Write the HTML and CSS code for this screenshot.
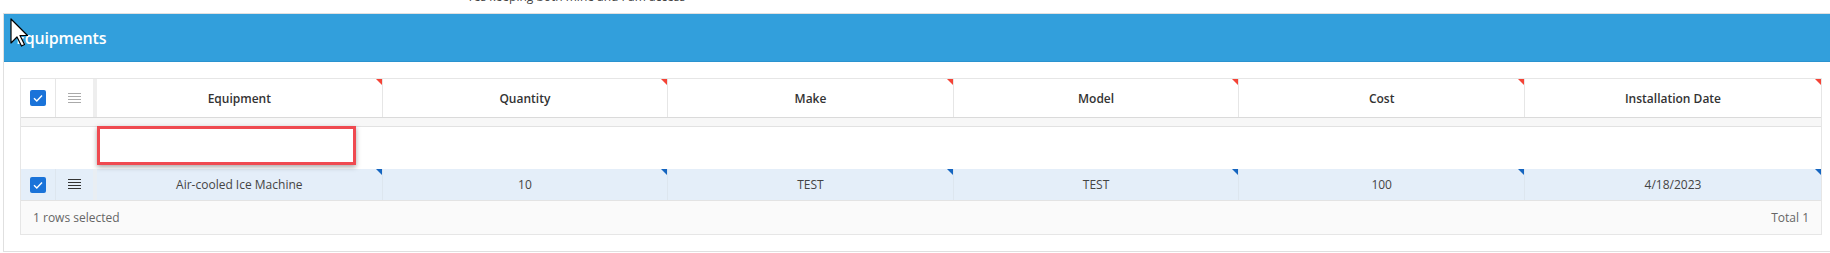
FILE: index.html
```html
<!DOCTYPE html>
<html>
<head>
<meta charset="utf-8">
<link rel="stylesheet" href="styles.css">
</head>
<body>
<div class="page">
  <div class="topnote"><span>Yes keeping both mine and I am access</span></div>
  <section class="panel">
    <header class="panel-head"><h2>Equipments</h2></header>
    <div class="panel-body">
      <div class="grid">
        <div class="row head">
          <div class="cell sel"><span class="cb"><svg viewBox="0 0 16 16" width="16" height="16"><path d="M4 8.2 L6.8 11 L12 5.4" fill="none" stroke="#fff" stroke-width="1.4"/></svg></span></div>
          <div class="cell drag"><svg class="ham light" viewBox="0 0 13 11" width="13" height="11"><path d="M0 0.5H13M0 3.5H13M0 6.5H13M0 9.5H13" stroke="currentColor" stroke-width="1"/></svg></div>
          <div class="cell col">Equipment<i class="flag red"></i></div>
          <div class="cell col">Quantity<i class="flag red"></i></div>
          <div class="cell col">Make<i class="flag red"></i></div>
          <div class="cell col">Model<i class="flag red"></i></div>
          <div class="cell col">Cost<i class="flag red"></i></div>
          <div class="cell col last">Installation Date<i class="flag red"></i></div>
        </div>
        <div class="band"></div>
        <div class="row empty"><div class="annot"></div></div>
        <div class="row data">
          <div class="cell sel"><span class="cb"><svg viewBox="0 0 16 16" width="16" height="16"><path d="M4 8.2 L6.8 11 L12 5.4" fill="none" stroke="#fff" stroke-width="1.4"/></svg></span></div>
          <div class="cell drag"><svg class="ham dark" viewBox="0 0 13 11" width="13" height="11"><path d="M0 0.5H13M0 3.5H13M0 6.5H13M0 9.5H13" stroke="currentColor" stroke-width="1"/></svg></div>
          <div class="cell col">Air-cooled Ice Machine<i class="flag blue"></i></div>
          <div class="cell col">10<i class="flag blue"></i></div>
          <div class="cell col">TEST<i class="flag blue"></i></div>
          <div class="cell col">TEST<i class="flag blue"></i></div>
          <div class="cell col">100<i class="flag blue"></i></div>
          <div class="cell col last">4/18/2023<i class="flag blue"></i></div>
        </div>
        <div class="foot"><span>1 rows selected</span><span>Total 1</span></div>
      </div>
    </div>
  </section>
  <svg class="cursor" viewBox="0 0 19 30" width="19" height="30"><path d="M1 1 L1 25 L7 19 L11.5 28 L14.5 26.5 L10 17.5 L17.5 17.5 Z" fill="#fff" stroke="#000" stroke-width="1.2" stroke-linejoin="round"/></svg>
</div>
</body>
</html>
```

FILE: styles.css
```css
html, body {
  margin: 0;
  padding: 0;
  background: #fff;
  overflow: hidden;
}
.page {
  position: relative;
  width: 1830px;
  height: 253px;
  overflow: hidden;
  font-family: "Open Sans", "Noto Sans", sans-serif;
  color: #333;
}
.topnote {
  height: 13px;
  overflow: hidden;
  padding-left: 467px;
  font-size: 12px;
  color: #444;
}
.topnote span {
  display: block;
  margin-top: -10px;
  line-height: 14px;
  white-space: nowrap;
}
.panel {
  margin-left: 3px;
  width: 1834px;
  border: 1px solid #e0e0e0;
  background: #fff;
}
.panel-head {
  height: 47px;
  background: #329fdc;
  border-bottom: 1px solid #2b93cf;
  display: flex;
  align-items: center;
  padding-left: 12px;
}
.panel-head h2 {
  margin: 0;
  font-size: 16px;
  font-weight: 600;
  color: #fff;
  letter-spacing: -0.2px;
}
.panel-body {
  padding: 16px;
}
.grid {
  width: 1800px;
  border: 1px solid #e6e6e6;
}
.row {
  display: flex;
}
.cell {
  display: flex;
  align-items: center;
  justify-content: center;
  position: relative;
  box-sizing: border-box;
}
.sel {
  flex: 0 0 35px;
  border-right: 1px solid #e6e6e6;
}
.drag {
  flex: 0 0 41px;
  border-right: 4px solid #eeeeee;
}
.col {
  flex: 0 0 285.6px;
  border-right: 1px solid #e6e6e6;
  font-size: 12px;
}
.col.last {
  flex: 1 1 auto;
  border-right: none;
}
.head {
  height: 38px;
}
.head .col {
  font-weight: 600;
  color: #333;
}
.band {
  height: 8px;
  background: #f7f7f7;
  border-top: 1px solid #dadada;
  border-bottom: 1px solid #e2e2e2;
}
.empty {
  height: 42px;
  position: relative;
}
.annot {
  position: absolute;
  left: 76px;
  top: -1px;
  width: 259px;
  height: 39px;
  box-sizing: border-box;
  border: 3px solid #ef4a50;
  box-shadow: 0 2px 5px rgba(0, 0, 0, 0.35);
}
.data {
  height: 32px;
  background: #e4eef9;
  border-bottom: 1px solid #e3e3e3;
  box-sizing: border-box;
}
.data .sel, .data .col {
  border-right-color: #dde6ef;
}
.data .drag {
  border-right-color: #e9eef3;
}
.data .col {
  color: #444;
}
.cb {
  width: 16px;
  height: 16px;
  border-radius: 2px;
  background: #1a73d9;
  display: block;
}
.cb svg {
  display: block;
}
.ham {
  display: block;
}
.ham.light {
  color: #aaaaaa;
}
.ham.dark {
  color: #333333;
}
.flag {
  position: absolute;
  top: 0;
  right: 0;
  width: 0;
  height: 0;
  border-top: 6px solid transparent;
  border-left: 6px solid transparent;
}
.flag.red {
  border-top-color: #f44336;
}
.flag.blue {
  border-top-color: #1565c0;
}
.foot {
  height: 33px;
  background: #fafafa;
  display: flex;
  align-items: center;
  justify-content: space-between;
  padding: 0 12px;
  font-size: 12px;
  color: #666;
}
.cursor {
  position: absolute;
  left: 10px;
  top: 18px;
}
```
